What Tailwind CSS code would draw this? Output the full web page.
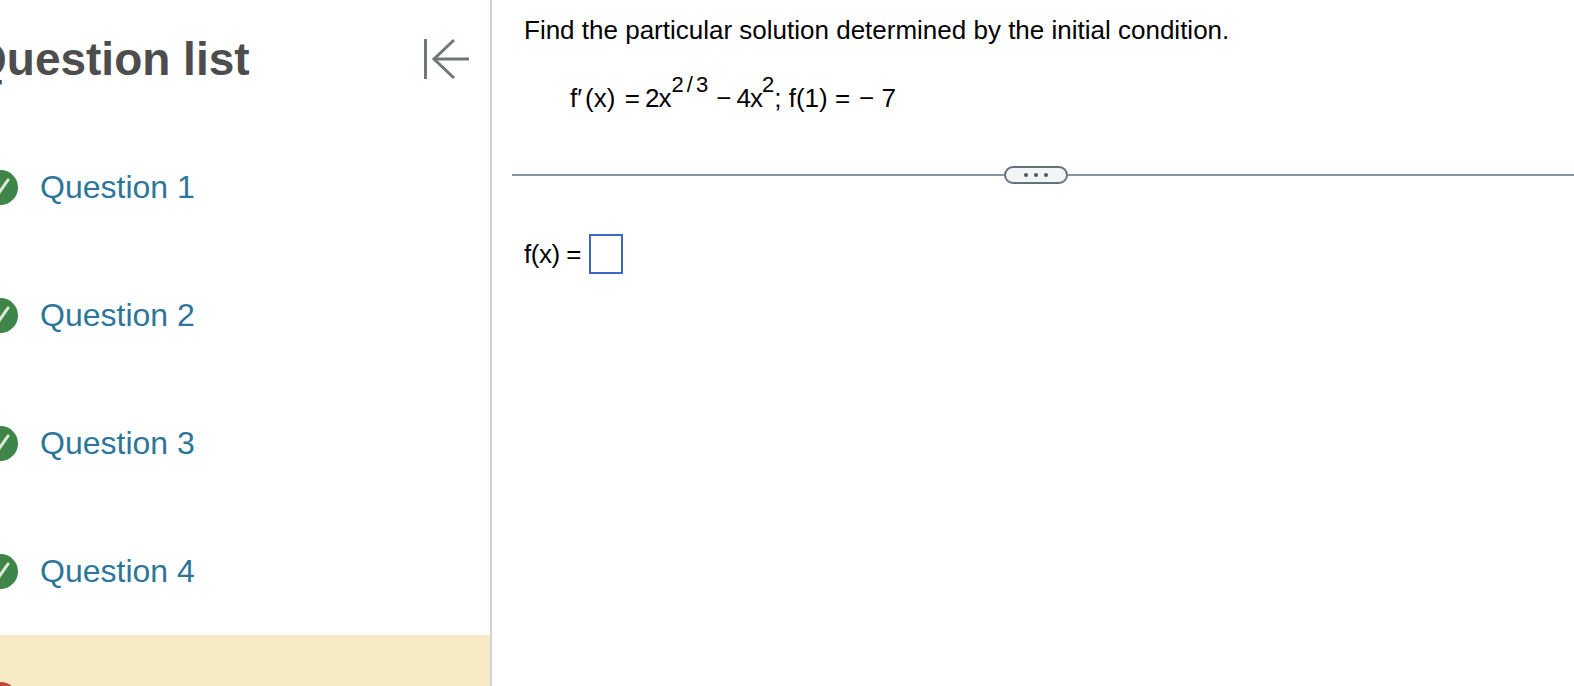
<!DOCTYPE html>
<html><head><meta charset="utf-8">
<script src="https://cdn.jsdelivr.net/npm/@tailwindcss/browser@4"></script>
</head>
<body class="bg-white">
<div class="flex h-[686px] w-[1574px] overflow-hidden bg-white font-['Liberation_Sans',Arial,sans-serif]">
  <aside class="w-[492px] shrink-0 overflow-hidden border-r-2 border-[#cdd2dd]">
    <header class="flex h-[123px] items-start justify-between pr-[21px] pt-[31px]">
      <h1 class="ml-[-29px] text-[46px] leading-[56px] font-bold whitespace-nowrap text-[#4d4d4d]">Question list</h1>
      <svg class="mt-[7px]" width="46" height="42" viewBox="0 0 46 42" fill="none" stroke="#6f7779" stroke-width="3"><path d="M2.5 1V41"/><path d="M46 21H11"/><path d="M31 2L11 21L31 40"/></svg>
    </header>
    <ul>
      <li class="flex h-[128px] items-center">
        <svg class="ml-[-17px] shrink-0" width="35" height="35" viewBox="0 0 35 35"><circle cx="17.5" cy="17.5" r="17.5" fill="#3e8647"/><path d="M13 27L25 10" stroke="#dfe9df" stroke-width="3" stroke-linecap="round"/></svg>
        <a class="ml-[22px] text-[32px] text-[#2e7699]">Question 1</a>
      </li>
      <li class="flex h-[128px] items-center">
        <svg class="ml-[-17px] shrink-0" width="35" height="35" viewBox="0 0 35 35"><circle cx="17.5" cy="17.5" r="17.5" fill="#3e8647"/><path d="M13 27L25 10" stroke="#dfe9df" stroke-width="3" stroke-linecap="round"/></svg>
        <a class="ml-[22px] text-[32px] text-[#2e7699]">Question 2</a>
      </li>
      <li class="flex h-[128px] items-center">
        <svg class="ml-[-17px] shrink-0" width="35" height="35" viewBox="0 0 35 35"><circle cx="17.5" cy="17.5" r="17.5" fill="#3e8647"/><path d="M13 27L25 10" stroke="#dfe9df" stroke-width="3" stroke-linecap="round"/></svg>
        <a class="ml-[22px] text-[32px] text-[#2e7699]">Question 3</a>
      </li>
      <li class="flex h-[128px] items-center">
        <svg class="ml-[-17px] shrink-0" width="35" height="35" viewBox="0 0 35 35"><circle cx="17.5" cy="17.5" r="17.5" fill="#3e8647"/><path d="M13 27L25 10" stroke="#dfe9df" stroke-width="3" stroke-linecap="round"/></svg>
        <a class="ml-[22px] text-[32px] text-[#2e7699]">Question 4</a>
      </li>
      <li class="flex h-[128px] items-center bg-[#f7ebc5]">
        <svg class="ml-[-17px] shrink-0" width="35" height="35" viewBox="0 0 35 35"><circle cx="17.5" cy="17.5" r="17.5" fill="#c0483f"/></svg>
      </li>
    </ul>
  </aside>
  <main class="flex-1 pl-[20px] text-black">
    <p class="ml-[12px] pt-[13px] text-[26px] leading-[34px] whitespace-nowrap">Find the particular solution determined by the initial condition.</p>
    <p class="ml-[58px] mt-[34px] h-[34px] text-[26px] leading-[34px] whitespace-nowrap">f′<span class="ml-[3px]">(x)</span><span class="ml-[3px] tracking-[-1px]"> = 2x</span><sup class="top-[-15px] ml-[1px] text-[22px] tracking-[3px]">2/3</sup><span class="ml-[5px] tracking-[-1px]">− 4x</span><sup class="top-[-15px] text-[22px]">2</sup>; f(1) =<span class="ml-[9px]">− 7</span></p>
    <div class="mt-[51px] flex h-[18px] items-center">
      <div class="h-[2px] w-[492px] bg-[#8a95a5]"></div>
      <div class="flex h-[18px] w-[64px] items-center justify-center gap-[6px] rounded-full border-2 border-[#66717f] bg-[#f3f4f6]">
        <span class="size-[4px] rounded-full bg-[#4f5660]"></span><span class="size-[4px] rounded-full bg-[#4f5660]"></span><span class="size-[4px] rounded-full bg-[#4f5660]"></span>
      </div>
      <div class="h-[2px] flex-1 bg-[#8a95a5]"></div>
    </div>
    <div class="ml-[12px] mt-[50px] flex items-center">
      <span class="text-[26px] leading-[40px] whitespace-nowrap tracking-[-0.5px]">f(x) =</span>
      <span class="ml-[8px] h-[40px] w-[34px] border-2 border-[#3f66c4]"></span>
    </div>
  </main>
</div>
</body></html>
